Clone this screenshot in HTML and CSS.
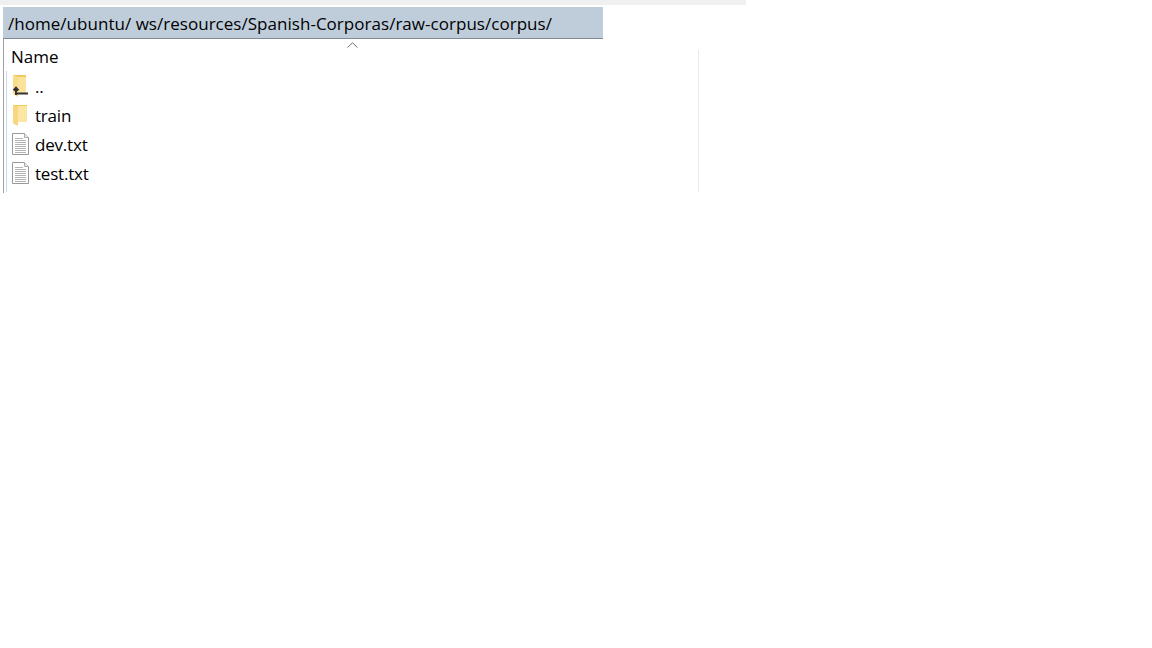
FILE: index.html
```html
<!DOCTYPE html>
<html lang="en">
<head>
  <meta charset="UTF-8">
  <title>corpus</title>
  <link rel="stylesheet" href="styles.css">
</head>
<body>
  <div class="top-strip"></div>
  <div class="pane">
    <div class="path-bar">/home/ubuntu/ ws/resources/Spanish-Corporas/raw-corpus/corpus/</div>
    <div class="listing">
      <div class="col-head">
        <span>Name</span>
        <svg class="sort-arrow" width="11" height="6" viewBox="0 0 11 6"><path d="M0.5 5.5 L5.5 0.8 L10.5 5.5" fill="none" stroke="#6e6e6e"/></svg>
      </div>
      <div class="rows">
        <div class="row">
          <svg class="icon" width="17" height="24" viewBox="0 0 17 24">
            <path d="M1 1 H14 V19 H1 Z" fill="#f0c860"/>
            <path d="M6 3 H14 V19 H6 Z" fill="#fbe29a"/>
            <path d="M1 1 L6 3 V23 L1 20 Z" fill="#f9dc8a"/>
            <path d="M4 21 V14 M1.5 16.4 L4 13.8 L6.5 16.4 M4 19.5 H16" fill="none" stroke="#333" stroke-width="2"/>
          </svg>
          <span>..</span>
        </div>
        <div class="row">
          <svg class="icon" width="17" height="24" viewBox="0 0 17 24">
            <path d="M1 2 H15 V19 H1 Z" fill="#f0c860"/>
            <path d="M6 3 H15 V19 H6 Z" fill="#fbe6a4"/>
            <path d="M1 2 L6 4 V23 L1 20.5 Z" fill="#f7d77f"/>
          </svg>
          <span>train</span>
        </div>
        <div class="row">
          <svg class="icon" width="17" height="24" viewBox="0 0 17 24">
            <path d="M0.5 1.5 H12.5 L16.5 5.5 V22.5 H0.5 Z" fill="#fff" stroke="#999"/>
            <path d="M12.5 1.5 V5.5 H16.5" fill="#eee" stroke="#aaa"/>
            <path d="M3 6.5 H11 M3 8.5 H14 M3 10.5 H14 M3 12.5 H14 M3 14.5 H14 M3 16.5 H14 M3 18.5 H14 M3 20.5 H14" stroke="#b4b4b4"/>
          </svg>
          <span>dev.txt</span>
        </div>
        <div class="row">
          <svg class="icon" width="17" height="24" viewBox="0 0 17 24">
            <path d="M0.5 1.5 H12.5 L16.5 5.5 V22.5 H0.5 Z" fill="#fff" stroke="#999"/>
            <path d="M12.5 1.5 V5.5 H16.5" fill="#eee" stroke="#aaa"/>
            <path d="M3 6.5 H11 M3 8.5 H14 M3 10.5 H14 M3 12.5 H14 M3 14.5 H14 M3 16.5 H14 M3 18.5 H14 M3 20.5 H14" stroke="#b4b4b4"/>
          </svg>
          <span>test.txt</span>
        </div>
      </div>
    </div>
  </div>
</body>
</html>
```

FILE: styles.css
```css
body {
  margin: 0;
  background: #fff;
  font-family: "Open Sans", "Liberation Sans", sans-serif;
  font-size: 17px;
  color: #000;
}
.top-strip {
  width: 746px;
  height: 5px;
  margin-bottom: 2px;
  background: #f0f0f0;
}
.pane {
  width: 696px;
  margin-left: 3px;
}
.path-bar {
  width: 600px;
  height: 32px;
  line-height: 33px;
  padding-left: 5px;
  box-sizing: border-box;
  background: #bfcddb;
  border-bottom: 1px solid #7f8a96;
  white-space: nowrap;
  letter-spacing: 0.03px;
}
.listing {
  position: relative;
  height: 154px;
  border-left: 1px solid #a0a0a0;
}
.listing::after {
  content: "";
  position: absolute;
  right: 0;
  top: 11px;
  bottom: 1px;
  width: 1px;
  background: #e6ecf5;
}
.col-head {
  display: flex;
  height: 30px;
  padding: 2px 0 0 7px;
  align-items: center;
  position: relative;
}
.sort-arrow {
  position: absolute;
  left: 343px;
  top: 3px;
}
.rows {
  margin-left: 2px;
  border-left: 1px solid #c5d9f1;
  height: 121px;
}
.row {
  display: flex;
  align-items: center;
  gap: 6px;
  height: 29px;
  padding-left: 5px;
  letter-spacing: -0.2px;
}
.row span {
  padding-top: 2px;
}
.icon {
  flex: none;
}
```
